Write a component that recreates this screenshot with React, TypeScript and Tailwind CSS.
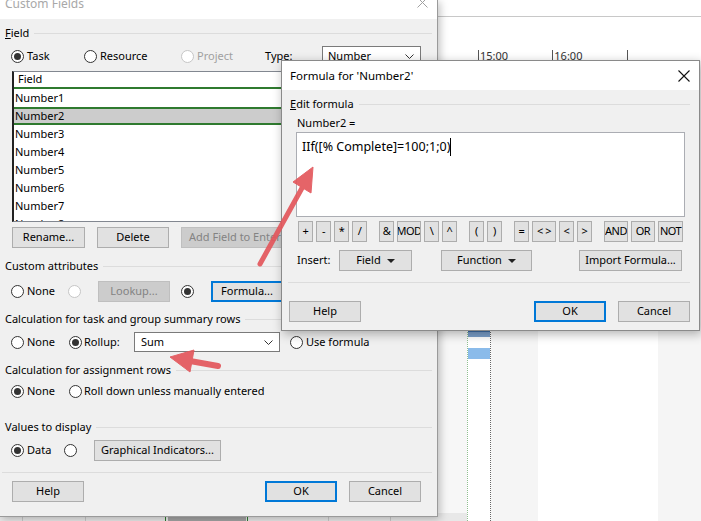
import type { ReactNode } from 'react'

function Radio({ on, off }: { on?: boolean; off?: boolean }) {
  return (
    <span
      className={`w-[13px] h-[13px] rounded-full border bg-white flex items-center justify-center shrink-0 ${
        off ? 'border-[#c6c6c6]' : 'border-[#333333]'
      }`}
    >
      {on && <span className="w-[7px] h-[7px] rounded-full bg-[#333333]" />}
    </span>
  )
}

function Btn({ children, className = '', focus, disabled }: { children: ReactNode; className?: string; focus?: boolean; disabled?: boolean }) {
  const look = focus
    ? 'border-2 border-[#0078d7] bg-[#e1e1e1] text-black'
    : disabled
    ? 'border border-[#bfbfbf] bg-[#cccccc] text-[#838383]'
    : 'border border-[#adadad] bg-[#e1e1e1] text-black'
  return (
    <div className={`h-[21px] shrink-0 flex items-center justify-center whitespace-nowrap overflow-hidden ${look} ${className}`}>
      {children}
    </div>
  )
}

function Group({ children, className = '' }: { children: ReactNode; className?: string }) {
  return (
    <div className={`h-[16px] flex items-center ${className}`}>
      <span className="whitespace-nowrap">{children}</span>
      <span className="flex-1 h-px bg-[#dcdcdc] ml-[5px]" />
    </div>
  )
}

function Chevron() {
  return (
    <svg width="9" height="5" viewBox="0 0 9 5" className="shrink-0">
      <path d="M0.5 0.5 L4.5 4.5 L8.5 0.5" fill="none" stroke="#333" strokeWidth="1" />
    </svg>
  )
}

function Caret() {
  return (
    <svg width="8" height="4" viewBox="0 0 8 4" className="ml-[6px]">
      <polygon points="0,0 8,0 4,4" fill="#222" />
    </svg>
  )
}

const fields = ['Number1', 'Number2', 'Number3', 'Number4', 'Number5', 'Number6', 'Number7', 'Number8']

function CustomFields() {
  return (
    <div className="absolute left-0 top-0 w-[438px] h-[517px] bg-[#f0f0f0] border-r border-b border-[#9a9a9a] shadow-[2px_2px_8px_rgba(0,0,0,0.25)] flex flex-col">
      <div className="h-[19px] bg-white flex items-start justify-between pl-[5px] pr-[9px] overflow-hidden">
        <span className="text-[#a8a8a8] text-[12px] -mt-[5px]">Custom Fields</span>
        <svg width="11" height="11" viewBox="0 0 11 11" className="-mt-[3px]">
          <path d="M0.5 0.5 L10.5 10.5 M10.5 0.5 L0.5 10.5" stroke="#a0a0a0" strokeWidth="1" />
        </svg>
      </div>
      <div className="pl-[5px] pr-[5px] flex flex-col">
        <Group className="mt-[6px]">
          <u>F</u>ield
        </Group>
        <div className="h-[20px] mt-[5px] flex items-center pl-[6px]">
          <span className="w-[73px] flex items-center gap-[3px]"><Radio on />Task</span>
          <span className="w-[97px] flex items-center gap-[3px]"><Radio />Resource</span>
          <span className="w-[84px] flex items-center gap-[3px] text-[#a0a0a0]"><Radio off />Project</span>
          <span className="w-[57px]">Type:</span>
          <div className="w-[99px] h-[21px] mt-[1px] bg-white border border-[#7a7a7a] flex items-center justify-between pl-[5px] pr-[6px]">
            <span>Number</span>
            <Chevron />
          </div>
        </div>
        <div className="mt-[5px] ml-[7px] w-[413px] h-[151px] bg-white border border-[#828790] border-l-2 border-l-[#222] overflow-hidden flex flex-col">
          <div className="h-[17px] shrink-0 flex items-center pl-[4px] border-b-2 border-[#2f7a2f]">Field</div>
          {fields.map((f) => (
            <div
              key={f}
              className={`h-[18px] shrink-0 flex items-center pl-[1px] ${
                f === 'Number2' ? 'bg-[#cccccc] border-2 border-[#2f7a2f] -ml-[2px]' : ''
              }`}
            >
              {f}
            </div>
          ))}
        </div>
        <div className="h-[22px] mt-[4px] ml-[7px] flex items-center gap-[12px]">
          <Btn className="w-[73px]">Rename...</Btn>
          <Btn className="w-[72px]">Delete</Btn>
          <Btn className="w-[140px] justify-start pl-[7px]" disabled>Add Field to Enterprise...</Btn>
        </div>
        <Group className="mt-[10px]">Custom attributes</Group>
        <div className="h-[22px] mt-[6px] pl-[6px] flex items-center">
          <span className="w-[57px] flex items-center gap-[3px]"><Radio />None</span>
          <span className="w-[30px] flex items-center"><Radio off /></span>
          <Btn className="w-[72px]" disabled>Lookup...</Btn>
          <span className="w-[11px]" />
          <span className="w-[30px] flex items-center"><Radio on /></span>
          <Btn className="w-[72px]" focus>Formula...</Btn>
        </div>
        <Group className="mt-[9px]">Calculation for task and group summary rows</Group>
        <div className="h-[22px] mt-[4px] pl-[6px] flex items-center">
          <span className="w-[58px] flex items-center gap-[3px]"><Radio />None</span>
          <span className="w-[65px] flex items-center gap-[2px]"><Radio on />Rollup:</span>
          <div className="w-[146px] h-[20px] bg-white border border-[#7a7a7a] flex items-center justify-between pl-[6px] pr-[6px]">
            <span>Sum</span>
            <Chevron />
          </div>
          <span className="ml-[10px] flex items-center gap-[3px]"><Radio />Use formula</span>
        </div>
        <Group className="mt-[9px]">Calculation for assignment rows</Group>
        <div className="h-[20px] mt-[3px] pl-[6px] flex items-center">
          <span className="w-[58px] flex items-center gap-[3px]"><Radio on />None</span>
          <span className="flex items-center gap-[2px]"><Radio />Roll down unless manually entered</span>
        </div>
        <Group className="mt-[18px]">Values to display</Group>
        <div className="h-[22px] mt-[4px] pl-[6px] flex items-center">
          <span className="w-[53px] flex items-center gap-[3px]"><Radio on />Data</span>
          <span className="w-[30px] flex items-center"><Radio /></span>
          <Btn className="w-[127px]">Graphical Indicators...</Btn>
        </div>
        <div className="h-px bg-[#dcdcdc] mt-[11px] -ml-[3px]" />
        <div className="h-[21px] mt-[8px] ml-[7px] flex items-center">
          <Btn className="w-[72px]">Help</Btn>
          <span className="w-[181px]" />
          <Btn className="w-[72px]" focus>OK</Btn>
          <span className="w-[12px]" />
          <Btn className="w-[72px]">Cancel</Btn>
        </div>
      </div>
    </div>
  )
}

const ops: { t: string; w: string; gap?: boolean }[] = [
  { t: '+', w: 'w-[15px]' },
  { t: '-', w: 'w-[15px]' },
  { t: '*', w: 'w-[15px]' },
  { t: '/', w: 'w-[15px]' },
  { t: '&', w: 'w-[15px]', gap: true },
  { t: 'MOD', w: 'w-[24px]' },
  { t: '\\', w: 'w-[15px]' },
  { t: '^', w: 'w-[15px]' },
  { t: '(', w: 'w-[15px]', gap: true },
  { t: ')', w: 'w-[15px]' },
  { t: '=', w: 'w-[15px]', gap: true },
  { t: '< >', w: 'w-[24px]' },
  { t: '<', w: 'w-[15px]' },
  { t: '>', w: 'w-[15px]' },
  { t: 'AND', w: 'w-[24px]', gap: true },
  { t: 'OR', w: 'w-[24px]' },
  { t: 'NOT', w: 'w-[25px]' },
]

function FormulaDialog() {
  return (
    <div className="absolute left-[281px] top-[60px] w-[419px] h-[271px] bg-[#f0f0f0] border border-[#8a8a8a] shadow-[2px_3px_10px_rgba(0,0,0,0.3)] flex flex-col">
      <div className="h-[29px] bg-white flex items-center justify-between pl-[8px] pr-[9px] shrink-0">
        <span className="text-[11.5px]">Formula for 'Number2'</span>
        <svg width="12" height="12" viewBox="0 0 12 12">
          <path d="M0.5 0.5 L11.5 11.5 M11.5 0.5 L0.5 11.5" stroke="#111" strokeWidth="1.1" />
        </svg>
      </div>
      <div className="flex flex-col pl-[8px] pr-[9px]">
        <Group className="mt-[6px]">
          <u>E</u>dit formula
        </Group>
        <div className="h-[16px] mt-[3px] ml-[7px] flex items-center">Number2 =</div>
        <div className="mt-[1px] ml-[6px] w-[389px] h-[85px] bg-white border border-[#abadb3] pl-[5px] pt-[4px] flex items-start">
          <span className="text-[12.5px] leading-[19px]">IIf([% Complete]=100;1;0)</span>
          <span className="w-px h-[18px] bg-black mt-[1px]" />
        </div>
        <div className="h-[21px] mt-[4px] ml-[8px] flex items-center">
          {ops.map((o) => (
            <Btn key={o.t} className={`${o.w} ${o.gap ? 'ml-[12px]' : 'ml-[3px]'} first:ml-0 tracking-[-0.5px]`}>
              {o.t}
            </Btn>
          ))}
        </div>
        <div className="h-[21px] mt-[8px] ml-[7px] flex items-center">
          <span className="w-[42px]">Insert:</span>
          <Btn className="w-[73px]">Field<Caret /></Btn>
          <span className="w-[29px]" />
          <Btn className="w-[91px]">Function<Caret /></Btn>
          <span className="w-[47px]" />
          <Btn className="w-[103px]">Import Formula...</Btn>
        </div>
        <div className="h-px bg-[#dcdcdc] mt-[11px] -ml-[2px]" />
        <div className="h-[21px] mt-[18px] ml-[-1px] flex items-center">
          <Btn className="w-[72px]">Help</Btn>
          <span className="w-[174px]" />
          <Btn className="w-[72px]" focus>OK</Btn>
          <span className="w-[12px]" />
          <Btn className="w-[72px]">Cancel</Btn>
        </div>
      </div>
    </div>
  )
}

function Background() {
  return (
    <div className="absolute inset-0 flex flex-col bg-white">
      <div className="h-[17px] shrink-0 border-b border-[#c8c8c8]" />
      <div className="h-[44px] shrink-0 flex items-end pl-[478px] text-[#333]">
        {['15:00', '16:00', ''].map((t, i) => (
          <div key={i} className="w-[98px] h-[11px] border-l border-[#555] pl-[1px] leading-[12px] text-[11px]">
            {t}
          </div>
        ))}
      </div>
      <div className="flex-1 flex">
        <div className="w-[467px] bg-[#f7f7f7] flex flex-col justify-end">
          <div className="h-[8px] bg-[#e8e8e8] flex">
            <div className="w-[23px] border-r border-[#c8c8c8]" />
            <div className="w-[63px] border-r border-[#c8c8c8]" />
            <div className="w-[80px] border-r border-[#2f7a2f]" />
            <div className="w-[2px]" />
            <div className="w-[78px] bg-[#a3a3a3]" />
            <div className="w-[2px] border-r border-[#2f7a2f]" />
            <div className="w-[81px] border-r border-[#c8c8c8]" />
            <div className="w-[62px] border-r border-[#c8c8c8]" />
          </div>
        </div>
        <div className="w-[24px] border-l border-[#8fbf8f] border-r border-dotted border-r-[#666] bg-white flex flex-col">
          <div className="mt-[261px] h-[10px] bg-[#3d6ea8]" />
          <div className="h-[5px] bg-[#7a9ec9]" />
          <div className="mt-[11px] h-[11px] bg-[#8abbea]" />
        </div>
        <div className="w-[47px] bg-[#f5f5f5]" />
        <div className="w-[120px] bg-white" />
        <div className="flex-1 bg-[#f5f5f5]" />
      </div>
    </div>
  )
}

function Arrows() {
  return (
    <svg className="absolute inset-0 pointer-events-none" width="701" height="521" viewBox="0 0 701 521">
      <g fill="#e3575c" stroke="#e3575c" opacity="0.92">
        <line x1="260" y1="264" x2="302" y2="188" strokeWidth="5" strokeLinecap="round" />
        <polygon points="313,167 311,193 293,182" strokeWidth="1" strokeLinejoin="round" />
        <line x1="218" y1="366" x2="190" y2="361" strokeWidth="6" strokeLinecap="round" />
        <polygon points="170,357 194,350 190,372" strokeWidth="1" strokeLinejoin="round" />
      </g>
    </svg>
  )
}

export default function App() {
  return (
    <div className="relative w-[701px] h-[521px] overflow-hidden bg-white text-[11px] text-black font-['Segoe_UI','Noto_Sans',sans-serif]">
      <Background />
      <CustomFields />
      <FormulaDialog />
      <Arrows />
    </div>
  )
}
